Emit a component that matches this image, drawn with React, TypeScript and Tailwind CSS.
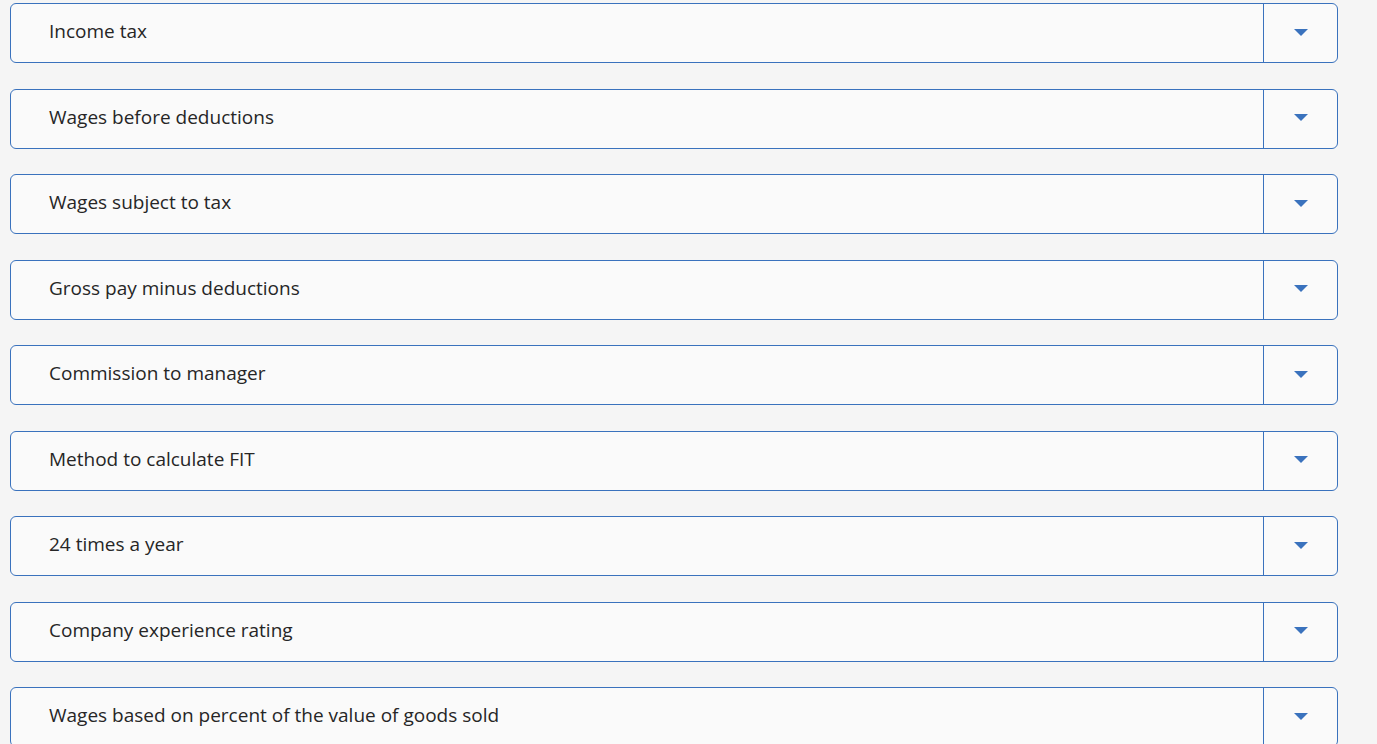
import React from 'react';

const items = [
  'Income tax',
  'Wages before deductions',
  'Wages subject to tax',
  'Gross pay minus deductions',
  'Commission to manager',
  'Method to calculate FIT',
  '24 times a year',
  'Company experience rating',
  'Wages based on percent of the value of goods sold',
];

function Caret() {
  return (
    <svg width="14" height="7" viewBox="0 0 14 7" className="block">
      <path d="M0 0 H14 L7 7 Z" fill="#3a72bd" />
    </svg>
  );
}

function SelectRow({ label }: { label: string }) {
  return (
    <div className="flex h-[60px] w-[1328px] shrink-0 rounded-[6px] border border-[#3a72bd] bg-[#fafafa]">
      <div className="flex flex-1 items-center pb-[3px] pl-[38px] text-[19px] text-[#262626]">{label}</div>
      <div className="flex w-[74px] items-center justify-center border-l border-[#3a72bd] pb-[2px]">
        <Caret />
      </div>
    </div>
  );
}

export default function App() {
  return (
    <div
      className="h-[744px] w-full overflow-hidden bg-[#f5f5f5] pl-[10px] pt-[3px]"
      style={{ fontFamily: '"Open Sans", Lato, sans-serif' }}
    >
      <div className="flex flex-col gap-[25.5px]">
        {items.map((label) => (
          <SelectRow key={label} label={label} />
        ))}
      </div>
    </div>
  );
}
